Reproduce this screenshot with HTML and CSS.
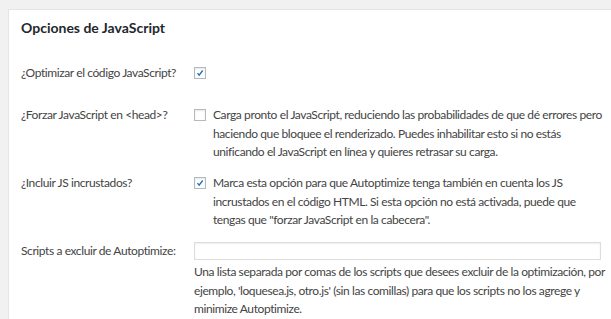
FILE: index.html
```html
<!DOCTYPE html>
<html lang="es">
<head>
    <meta charset="UTF-8">
    <title>Opciones de JavaScript</title>
    <link rel="stylesheet" href="styles.css">
</head>
<body>
    <div class="panel">
        <h2>Opciones de JavaScript</h2>
        <div class="form-table">
            <div class="row row-single">
                <label class="label" for="js-optimize">¿Optimizar el código JavaScript?</label>
                <div class="field">
                    <span class="checkbox" id="js-optimize"><svg viewBox="0 0 12 12" width="12" height="12"><path d="M3 6.2 L5 8.6 L9.2 3" fill="none" stroke="#1e6fbf" stroke-width="1.6"/></svg></span>
                </div>
            </div>

            <div class="row">
                <label class="label" for="js-forcehead">¿Forzar JavaScript en &lt;head&gt;?</label>
                <div class="field check-field">
                    <span class="checkbox" id="js-forcehead"></span>
                    <span class="desc desc-wide">Carga pronto el JavaScript, reduciendo las probabilidades de que dé errores pero haciendo que bloquee el renderizado. Puedes inhabilitar esto si no estás unificando el JavaScript en línea y quieres retrasar su carga.</span>
                </div>
            </div>

            <div class="row">
                <label class="label" for="js-include-inline">¿Incluir JS incrustados?</label>
                <div class="field check-field">
                    <span class="checkbox" id="js-include-inline"><svg viewBox="0 0 12 12" width="12" height="12"><path d="M3 6.2 L5 8.6 L9.2 3" fill="none" stroke="#1e6fbf" stroke-width="1.6"/></svg></span>
                    <span class="desc">Marca esta opción para que Autoptimize tenga también en cuenta los JS incrustados en el código HTML. Si esta opción no está activada, puede que tengas que "forzar JavaScript en la cabecera".</span>
                </div>
            </div>

            <div class="row">
                <label class="label" for="js-exclude">Scripts a excluir de Autoptimize:</label>
                <div class="field">
                    <input type="text" id="js-exclude">
                    <div class="desc">Una lista separada por comas de los scripts que desees excluir de la optimización, por ejemplo, 'loquesea.js, otro.js' (sin las comillas) para que los scripts no los agrege y minimize Autoptimize.</div>
                </div>
            </div>
        </div>
    </div>
</body>
</html>
```

FILE: styles.css
```css
body {
    margin: 0;
    background-color: #f1f1f1;
    color: #444;
    font-family: Lato, "Open Sans", sans-serif;
    font-size: 12px;
    letter-spacing: -0.4px;
    line-height: 18.5px;
    overflow: hidden;
}
.panel {
    width: 720px;
    margin: 9px 0 0 8px;
    padding: 0 12px 20px;
    background-color: #fff;
    border: 1px solid #e5e5e5;
}
h2 {
    margin: 0;
    padding-top: 8px;
    font-size: 14px;
    font-weight: 700;
    letter-spacing: 0;
    line-height: 20px;
    color: #23282d;
}
.form-table {
    margin-top: 26px;
}
.row {
    display: flex;
    margin-bottom: 12.5px;
}
.row-single {
    margin-bottom: 23.5px;
}
.label {
    width: 173px;
    flex-shrink: 0;
    white-space: nowrap;
}
.field {
    width: 420px;
}
.check-field {
    display: flex;
    align-items: flex-start;
}
.check-field .desc {
    flex-shrink: 0;
    padding-left: 7px;
    width: 372px;
}
.check-field .desc-wide {
    width: 398px;
}
.checkbox {
    display: block;
    flex-shrink: 0;
    width: 12px;
    height: 12px;
    margin-top: 3px;
    border: 1px solid #b4b9be;
    background-color: #fff;
    box-shadow: inset 0 1px 2px rgba(0, 0, 0, 0.1);
    box-sizing: border-box;
}
.checkbox svg {
    display: block;
    width: 10px;
    height: 10px;
}
input[type="text"] {
    display: block;
    width: 407px;
    height: 18px;
    margin: 0 0 3px;
    border: 1px solid #ddd;
    box-sizing: border-box;
    box-shadow: inset 0 1px 2px rgba(0, 0, 0, 0.07);
}
```
